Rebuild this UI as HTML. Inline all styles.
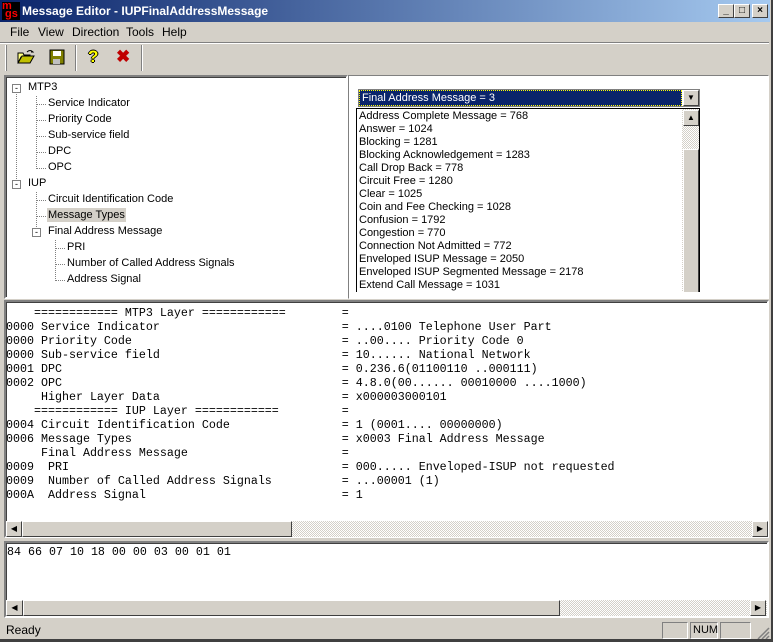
<!DOCTYPE html>
<html><head><style>
*{margin:0;padding:0;box-sizing:border-box}
body{width:773px;height:642px;background:#d4d0c8;font-family:"Liberation Sans",sans-serif;font-size:11px;position:relative;overflow:hidden;color:#000}
.a{position:absolute}
.title{left:0;top:0;width:773px;height:22px;background:linear-gradient(90deg,#0a246a,#a6caf0);color:#fff;font-weight:bold;font-size:12px}
.btn{width:16px;height:14px;background:#d4d0c8;border:1px solid;border-color:#fff #404040 #404040 #fff;top:4px;font-size:10px;font-weight:bold;text-align:center;line-height:12px;color:#000}
.sunk{border:2px solid;border-color:#808080 #fff #fff #808080;box-shadow:inset 1px 1px 0 #404040}
.white{background:#fff}
.tree div{position:absolute;white-space:nowrap}
.mono{font-family:"Liberation Mono",monospace;font-size:11.67px;white-space:pre;line-height:14px}
.hatch{background:repeating-conic-gradient(#d4d0c8 0 25%,#fff 0 50%) 0 0/2px 2px}
.sbtn{background:#d4d0c8;border:1px solid;border-color:#fff #404040 #404040 #fff}
.list div{height:13px;line-height:13px;white-space:nowrap}
.dot{border-left:1px dotted #808080}
.doth{border-top:1px dotted #808080}
.pm{width:9px;height:9px;border:1px solid #808080;background:#fff;font-size:9px;line-height:6px;text-align:center}
</style></head><body>
<div class="a title">
 <div class="a" style="left:2px;top:2px;width:18px;height:18px;color:#f00;font-size:11px;line-height:8px;font-weight:bold;background:#000">m<br>&nbsp;gs</div>
 <div class="a" style="left:22px;top:4px">Message Editor - IUPFinalAddressMessage</div>
 <div class="a btn" style="left:718px">_</div>
 <div class="a btn" style="left:734px">□</div>
 <div class="a btn" style="left:752px">×</div>
</div>
<div class="a" style="top:25px;left:10px;font-size:12px;word-spacing:0">File</div>
<div class="a" style="top:25px;left:38px;font-size:12px">View</div>
<div class="a" style="top:25px;left:72px;font-size:12px">Direction</div>
<div class="a" style="top:25px;left:126px;font-size:12px">Tools</div>
<div class="a" style="top:25px;left:162px;font-size:12px">Help</div>
<div class="a" style="top:42px;left:0;width:769px;height:2px;border-top:1px solid #808080;border-bottom:1px solid #fff"></div>
<div class="a" style="top:45px;left:5px;width:2px;height:26px;border-left:1px solid #fff;border-right:1px solid #808080"></div>
<div class="a" style="top:45px;left:75px;width:2px;height:26px;border-left:1px solid #808080;border-right:1px solid #fff"></div>
<div class="a" style="top:45px;left:141px;width:2px;height:26px;border-left:1px solid #808080;border-right:1px solid #fff"></div>
<svg class="a" style="left:17px;top:49px" width="18" height="16"><path d="M1 4h5l1 2h6v2H4L1 14z" fill="#ffff80" stroke="#000"/><path d="M1 14l4-7h12l-4 7z" fill="#c0c000" stroke="#000"/><path d="M10 3q3-3 6 0l-2 0" fill="none" stroke="#000"/></svg>
<svg class="a" style="left:49px;top:49px" width="16" height="16"><rect x="1" y="1" width="14" height="14" fill="#808000" stroke="#000"/><rect x="4" y="2" width="8" height="5" fill="#fff"/><rect x="4" y="10" width="7" height="5" fill="#c0c0c0"/></svg>
<div class="a" style="left:88px;top:47px;font-size:17px;font-weight:bold;color:#ff0;text-shadow:1px 0 #000,-1px 0 #000,0 1px #000,0 -1px #000">?</div>
<div class="a" style="left:116px;top:47px;font-size:17px;font-weight:bold;color:#c00000">✖</div>

<div class="a sunk white" style="left:4px;top:75px;width:344px;height:224px"></div>
<div class="a tree" style="left:6px;top:78px;width:340px;height:218px">
 <div class="dot" style="left:10px;top:11px;height:94px"></div>
 <div class="dot" style="left:30px;top:18px;height:73px"></div>
 <div class="dot" style="left:30px;top:114px;height:41px"></div>
 <div class="dot" style="left:49px;top:162px;height:41px"></div>
 <div class="doth" style="left:30px;top:26px;width:10px"></div><div class="doth" style="left:30px;top:42px;width:10px"></div><div class="doth" style="left:30px;top:58px;width:10px"></div><div class="doth" style="left:30px;top:74px;width:10px"></div><div class="doth" style="left:30px;top:90px;width:10px"></div>
 <div class="doth" style="left:30px;top:122px;width:10px"></div><div class="doth" style="left:30px;top:138px;width:10px"></div>
 <div class="doth" style="left:49px;top:170px;width:10px"></div><div class="doth" style="left:49px;top:186px;width:10px"></div><div class="doth" style="left:49px;top:202px;width:10px"></div>
 <div class="pm" style="left:6px;top:6px">-</div><div class="pm" style="left:6px;top:102px">-</div><div class="pm" style="left:26px;top:150px">-</div>
 <div style="left:22px;top:3px">MTP3</div>
 <div style="left:42px;top:19px">Service Indicator</div>
 <div style="left:42px;top:35px">Priority Code</div>
 <div style="left:42px;top:51px">Sub-service field</div>
 <div style="left:42px;top:67px">DPC</div>
 <div style="left:42px;top:83px">OPC</div>
 <div style="left:22px;top:99px">IUP</div>
 <div style="left:42px;top:115px">Circuit Identification Code</div>
 <div style="left:41px;top:130px;background:#d4d0c8;padding:1px 1px">Message Types</div>
 <div style="left:42px;top:147px">Final Address Message</div>
 <div style="left:61px;top:163px">PRI</div>
 <div style="left:61px;top:179px">Number of Called Address Signals</div>
 <div style="left:61px;top:195px">Address Signal</div>
</div>
<div class="a sunk white" style="left:348px;top:75px;width:421px;height:224px;border-width:1px;box-shadow:none"></div>
<div class="a" style="left:358px;top:89px;width:342px;height:18px;background:#fff;border:1px solid #808080"></div>
<div class="a" style="left:359px;top:90px;width:323px;height:16px;background:#0a246a;color:#fff;outline:1px dotted #ff0;outline-offset:-1px;padding:1px 3px;font-size:11px;line-height:14px">Final Address Message = 3</div>
<div class="a sbtn" style="left:683px;top:90px;width:16px;height:16px;font-size:8px;text-align:center;line-height:14px">▼</div>
<div class="a" style="left:356px;top:108px;width:344px;height:184px;background:#fff;border:1px solid #000;border-bottom:none;overflow:hidden">
 <div class="list" style="position:absolute;left:2px;top:1px">
 <div>Address Complete Message = 768</div><div>Answer = 1024</div><div>Blocking = 1281</div><div>Blocking Acknowledgement = 1283</div><div>Call Drop Back = 778</div><div>Circuit Free = 1280</div><div>Clear = 1025</div><div>Coin and Fee Checking = 1028</div><div>Confusion = 1792</div><div>Congestion = 770</div><div>Connection Not Admitted = 772</div><div>Enveloped ISUP Message = 2050</div><div>Enveloped ISUP Segmented Message = 2178</div><div>Extend Call Message = 1031</div>
 </div>
 <div class="a hatch" style="left:325px;top:0;width:17px;height:184px"></div>
 <div class="a sbtn" style="left:326px;top:1px;width:16px;height:16px;font-size:8px;text-align:center;line-height:14px">▲</div>
 <div class="a sbtn" style="left:326px;top:40px;width:16px;height:144px"></div>
</div>

<div class="a sunk white" style="left:4px;top:300px;width:765px;height:238px"></div>
<div class="a mono" style="left:6px;top:306px">    ============ MTP3 Layer ============        =
0000 Service Indicator                          = ....0100 Telephone User Part
0000 Priority Code                              = ..00.... Priority Code 0
0000 Sub-service field                          = 10...... National Network
0001 DPC                                        = 0.236.6(01100110 ..000111)
0002 OPC                                        = 4.8.0(00...... 00010000 ....1000)
     Higher Layer Data                          = x000003000101
    ============ IUP Layer ============         =
0004 Circuit Identification Code                = 1 (0001.... 00000000)
0006 Message Types                              = x0003 Final Address Message
     Final Address Message                      =
0009  PRI                                       = 000..... Enveloped-ISUP not requested
0009  Number of Called Address Signals          = ...00001 (1)
000A  Address Signal                            = 1</div>
<div class="a hatch" style="left:6px;top:521px;width:761px;height:16px"></div>
<div class="a sbtn" style="left:6px;top:521px;width:16px;height:16px;font-size:8px;text-align:center;line-height:14px">◀</div>
<div class="a sbtn" style="left:22px;top:521px;width:270px;height:16px"></div>
<div class="a sbtn" style="left:752px;top:521px;width:16px;height:16px;font-size:8px;text-align:center;line-height:14px">▶</div>

<div class="a sunk white" style="left:4px;top:541px;width:765px;height:77px"></div>
<div class="a mono" style="left:7px;top:545px">84 66 07 10 18 00 00 03 00 01 01</div>
<div class="a hatch" style="left:6px;top:600px;width:761px;height:16px"></div>
<div class="a sbtn" style="left:6px;top:600px;width:17px;height:16px;font-size:8px;text-align:center;line-height:14px">◀</div>
<div class="a sbtn" style="left:23px;top:600px;width:537px;height:16px"></div>
<div class="a sbtn" style="left:750px;top:600px;width:16px;height:16px;font-size:8px;text-align:center;line-height:14px">▶</div>

<div class="a" style="left:6px;top:623px;font-size:12px">Ready</div>
<div class="a" style="left:662px;top:622px;width:26px;height:17px;border:1px solid;border-color:#808080 #fff #fff #808080"></div>
<div class="a" style="left:690px;top:622px;width:28px;height:17px;border:1px solid;border-color:#808080 #fff #fff #808080;font-size:11px;padding:1px 2px">NUM</div>
<div class="a" style="left:720px;top:622px;width:31px;height:17px;border:1px solid;border-color:#808080 #fff #fff #808080"></div>
<svg class="a" style="left:757px;top:627px" width="14" height="14"><path d="M12 1L1 12M12 5L5 12M12 9L9 12" stroke="#808080" stroke-width="1.5"/></svg>
<div class="a" style="left:770px;top:0;width:3px;height:642px;background:#404040;border-left:1px solid #d4d0c8"></div>
<div class="a" style="left:0;top:639px;width:773px;height:3px;background:#404040"></div>
</body></html>
